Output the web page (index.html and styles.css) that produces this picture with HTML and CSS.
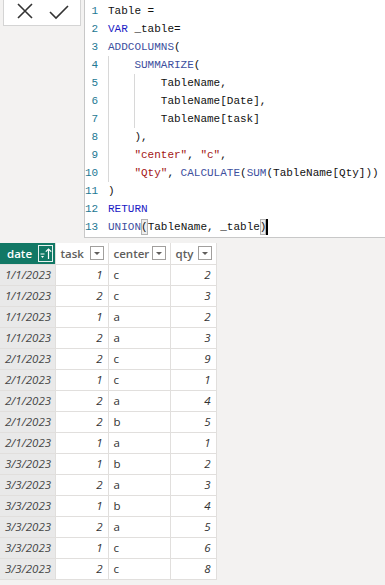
FILE: index.html
```
<!DOCTYPE html>
<html lang="en">
<head>
    <meta charset="UTF-8">
    <meta name="viewport" content="width=device-width, initial-scale=1.0">
    <title>Table</title>
    <link rel="stylesheet" href="styles.css">
</head>
<body>

    <div class="top">
        <div class="toolbar">
            <svg width="76" height="25" viewBox="0 0 76 25">
                <path d="M14 4 L28 18 M28 4 L14 18" stroke="#333" stroke-width="1.6" fill="none"/>
                <path d="M46 12 L52 18 L64 6" stroke="#333" stroke-width="1.6" fill="none"/>
            </svg>
        </div>
        <div class="editor">
            <div class="ln"><span class="num">1</span><span class="code">Table =</span></div>
            <div class="ln"><span class="num">2</span><span class="code"><span class="kw">VAR</span> _table=</span></div>
            <div class="ln"><span class="num">3</span><span class="code"><span class="fn">ADDCOLUMNS</span>(</span></div>
            <div class="ln"><span class="num">4</span><span class="code"><span class="tab"></span><span class="fn">SUMMARIZE</span>(</span></div>
            <div class="ln"><span class="num">5</span><span class="code"><span class="tab"></span><span class="tab"></span>TableName,</span></div>
            <div class="ln"><span class="num">6</span><span class="code"><span class="tab"></span><span class="tab"></span>TableName[Date],</span></div>
            <div class="ln"><span class="num">7</span><span class="code"><span class="tab"></span><span class="tab"></span>TableName[task]</span></div>
            <div class="ln"><span class="num">8</span><span class="code"><span class="tab"></span>),</span></div>
            <div class="ln"><span class="num">9</span><span class="code"><span class="tab"></span><span class="str">"center"</span>, <span class="str">"c"</span>,</span></div>
            <div class="ln"><span class="num">10</span><span class="code"><span class="tab"></span><span class="str">"Qty"</span>, <span class="fn">CALCULATE</span>(<span class="fn">SUM</span>(TableName[Qty]))</span></div>
            <div class="ln"><span class="num">11</span><span class="code">)</span></div>
            <div class="ln"><span class="num">12</span><span class="code"><span class="kw">RETURN</span></span></div>
            <div class="ln"><span class="num">13</span><span class="code"><span class="fn">UNION</span><span class="match">(</span>TableName, _table<span class="match">)</span><span class="caret"></span></span></div>
        </div>
    </div>

    <table class="grid">
        <colgroup>
            <col class="c-date">
            <col class="c-task">
            <col class="c-center">
            <col class="c-qty">
        </colgroup>
        <thead>
            <tr>
                <th class="sorted"><div class="th"><span>date</span><span class="sortbox"><svg width="13" height="13" viewBox="0 0 13 13"><path d="M1.5 7 H5.5" stroke="#fff" stroke-width="1"/><path d="M2 9 L5 9 L3.5 11 Z" fill="#fff"/><path d="M9.5 12 V2 M6.8 4.7 L9.5 2 L12.2 4.7" stroke="#fff" stroke-width="1.2" fill="none"/></svg></span></div></th>
                <th><div class="th"><span>task</span><span class="drop"></span></div></th>
                <th><div class="th"><span>center</span><span class="drop"></span></div></th>
                <th><div class="th"><span>qty</span><span class="drop"></span></div></th>
            </tr>
        </thead>
        <tbody>
            <tr><td class="d">1/1/2023</td><td class="n">1</td><td>c</td><td class="n">2</td></tr>
            <tr><td class="d">1/1/2023</td><td class="n">2</td><td>c</td><td class="n">3</td></tr>
            <tr><td class="d">1/1/2023</td><td class="n">1</td><td>a</td><td class="n">2</td></tr>
            <tr><td class="d">1/1/2023</td><td class="n">2</td><td>a</td><td class="n">3</td></tr>
            <tr><td class="d">2/1/2023</td><td class="n">2</td><td>c</td><td class="n">9</td></tr>
            <tr><td class="d">2/1/2023</td><td class="n">1</td><td>c</td><td class="n">1</td></tr>
            <tr><td class="d">2/1/2023</td><td class="n">2</td><td>a</td><td class="n">4</td></tr>
            <tr><td class="d">2/1/2023</td><td class="n">2</td><td>b</td><td class="n">5</td></tr>
            <tr><td class="d">2/1/2023</td><td class="n">1</td><td>a</td><td class="n">1</td></tr>
            <tr><td class="d">3/3/2023</td><td class="n">1</td><td>b</td><td class="n">2</td></tr>
            <tr><td class="d">3/3/2023</td><td class="n">2</td><td>a</td><td class="n">3</td></tr>
            <tr><td class="d">3/3/2023</td><td class="n">1</td><td>b</td><td class="n">4</td></tr>
            <tr><td class="d">3/3/2023</td><td class="n">2</td><td>a</td><td class="n">5</td></tr>
            <tr><td class="d">3/3/2023</td><td class="n">1</td><td>c</td><td class="n">6</td></tr>
            <tr><td class="d">3/3/2023</td><td class="n">2</td><td>c</td><td class="n">8</td></tr>
        </tbody>
    </table>

</body>
</html>
```

FILE: styles.css
```
body {
    margin: 0;
    background: #f3f2f1;
    font-family: "Open Sans", "Noto Sans", sans-serif;
}

.top {
    display: flex;
    align-items: flex-start;
}

.toolbar {
    margin-left: 3px;
    width: 76px;
    height: 25px;
    background: white;
    border: 1px solid #d4d4d4;
    border-top: none;
}

.toolbar svg {
    display: block;
}

/* formula editor */
.editor {
    margin-left: 3px;
    flex: 1;
    height: 235px;
    padding-top: 2px;
    background: white;
    border-left: 1px solid #c8c8c8;
    border-bottom: 1px solid #c8c8c8;
    font-family: "Liberation Mono", monospace;
    font-size: 11px;
    line-height: 18px;
    color: #111;
}

.ln {
    display: flex;
    height: 18px;
}

.num {
    width: 13px;
    text-align: right;
    color: #237893;
}

.code {
    margin-left: 10px;
    white-space: pre;
    display: flex;
    align-items: stretch;
}

.tab {
    display: inline-block;
    width: 26.4px;
    border-left: 1px solid #d8d8d8;
    box-sizing: border-box;
}

.kw {
    color: #1a1ac4;
}

.fn {
    color: #3d4f9e;
}

.str {
    color: #a31515;
}

.match {
    background: #ededed;
    outline: 1px solid #b4b4b4;
    outline-offset: -1px;
    margin: 1px 0;
    line-height: 16px;
}

.caret {
    display: inline-block;
    width: 2px;
    height: 16px;
    margin-top: 1px;
    background: #000;
}

/* data grid */
.grid {
    margin-top: 5px;
    border-collapse: collapse;
    background: white;
    font-size: 11.5px;
    table-layout: fixed;
    width: 216px;
}

.c-date { width: 55px; }
.c-task { width: 53px; }
.c-center { width: 62px; }
.c-qty { width: 46px; }

.grid th {
    height: 21px;
    padding: 0 4px 0 5px;
    text-align: left;
    color: #605e5c;
    font-weight: 600;
    font-size: 11.5px;
    border-right: 1px solid #e1dfdd;
    border-bottom: 1px solid #e1dfdd;
    white-space: nowrap;
    box-sizing: border-box;
}

.th {
    display: flex;
    align-items: center;
    justify-content: space-between;
}

.grid th.sorted {
    background: #117865;
    color: white;
    padding: 0 2px 0 7px;
}

.sortbox {
    width: 13px;
    height: 15px;
    border: 1px solid #e6f2ef;
    display: flex;
    align-items: center;
    justify-content: center;
}

.drop {
    flex-shrink: 0;
    width: 12px;
    height: 12px;
    border: 1px solid #a19f9d;
    position: relative;
}

.drop::after {
    content: "";
    position: absolute;
    left: 3px;
    top: 5px;
    border-left: 3px solid transparent;
    border-right: 3px solid transparent;
    border-top: 3px solid #605e5c;
}

.grid td {
    height: 21px;
    padding: 0 5px;
    color: #333;
    border-right: 1px solid #e1dfdd;
    border-bottom: 1px solid #e1dfdd;
    box-sizing: border-box;
}

.grid td.d {
    background: #e9e9e9;
    font-style: italic;
    text-align: right;
    color: #444;
}

.grid td.n {
    font-style: italic;
    text-align: right;
}
```
